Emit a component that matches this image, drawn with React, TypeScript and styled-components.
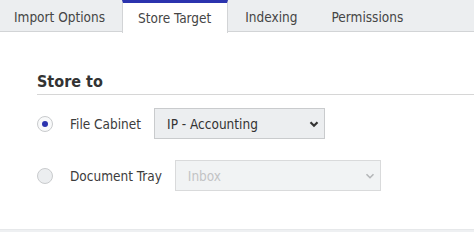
import React, { useState } from 'react';
import styled, { createGlobalStyle } from 'styled-components';

const GlobalStyle = createGlobalStyle`
  html, body {
    margin: 0;
    padding: 0;
    background: #ffffff;
  }
  body {
    font-family: "DejaVu Sans Condensed", "DejaVu Sans", sans-serif;
    color: #3c3c3c;
  }
`;

const Page = styled.div`
  width: 474px;
  height: 232px;
  display: flex;
  flex-direction: column;
  overflow: hidden;
`;

// Tab strip along the top
const TabBar = styled.div`
  display: flex;
  height: 32px;
  background: #eceef0;
  border-bottom: 1px solid #d2d4d6;
  box-sizing: border-box;
`;

const Tab = styled.div<{ $active?: boolean }>`
  display: flex;
  align-items: center;
  padding: 0 ${(p) => (p.$active ? '16px 0 15px' : '17px')};
  font-size: 13.5px;
  color: #454545;
  box-sizing: border-box;
  height: ${(p) => (p.$active ? '33px' : '31px')};
  background: ${(p) => (p.$active ? '#ffffff' : 'transparent')};
  border-top: ${(p) => (p.$active ? '3px solid #2b33ae' : '0')};
  border-left: ${(p) => (p.$active ? '1px solid #d2d4d6' : '0')};
  border-right: ${(p) => (p.$active ? '1px solid #d2d4d6' : '0')};
  padding-top: ${(p) => (p.$active ? '0' : '3px')};
  cursor: pointer;

  &:first-child {
    padding-left: 14px;
  }
`;

const Body = styled.div`
  flex: 1;
  padding: 40px 0 0 37px;
  border-bottom: 1px solid #e6e8ea;
`;

const SectionTitle = styled.h3`
  margin: 0;
  font-size: 16px;
  font-weight: bold;
  color: #333333;
  padding-bottom: 3px;
  border-bottom: 1px solid #d6d6d6;
  line-height: 19px;
`;

const Options = styled.div`
  display: flex;
  flex-direction: column;
  gap: 21px;
  padding-top: 13px;
`;

const Row = styled.label`
  display: flex;
  align-items: center;
  font-size: 13.5px;
  color: #3c3c3c;
  cursor: pointer;
`;

const Radio = styled.span<{ $checked?: boolean }>`
  width: 16px;
  height: 16px;
  border-radius: 50%;
  box-sizing: border-box;
  border: 1px solid #c9cbcd;
  background: ${(p) => (p.$checked ? '#f8f9fa' : '#eceef0')};
  display: flex;
  align-items: center;
  justify-content: center;
  margin-right: 17px;
  flex-shrink: 0;

  &::after {
    content: '';
    width: 6px;
    height: 6px;
    border-radius: 50%;
    background: #2b33ae;
    display: ${(p) => (p.$checked ? 'block' : 'none')};
  }
`;

const LabelText = styled.span`
  margin-right: 13px;
`;

const SelectWrap = styled.div<{ $width: number }>`
  position: relative;
  width: ${(p) => p.$width}px;
`;

const Select = styled.select`
  appearance: none;
  -webkit-appearance: none;
  width: 100%;
  height: 31px;
  box-sizing: border-box;
  padding: 0 28px 0 12px;
  border: 1px solid #c9cbcd;
  border-radius: 0;
  background: #eceef0;
  font-family: inherit;
  font-size: 13.5px;
  color: #333333;
  outline: none;

  &:disabled {
    color: #a9abad;
  }
`;

const Chevron = styled.svg<{ $muted?: boolean }>`
  position: absolute;
  right: 6px;
  top: 50%;
  margin-top: -5px;
  width: 10px;
  height: 10px;
  pointer-events: none;
  stroke: ${(p) => (p.$muted ? '#b4b6b8' : '#333333')};
`;

const Footer = styled.div`
  height: 2px;
  background: #eef0f2;
`;

const tabs = ['Import Options', 'Store Target', 'Indexing', 'Permissions'];

const App = () => {
  const [target, setTarget] = useState('cabinet');

  return (
    <Page>
      <GlobalStyle />
      <TabBar>
        {tabs.map((t) => (
          <Tab key={t} $active={t === 'Store Target'}>
            {t}
          </Tab>
        ))}
      </TabBar>
      <Body>
        <SectionTitle>Store to</SectionTitle>
        <Options>
          <Row onClick={() => setTarget('cabinet')}>
            <Radio $checked={target === 'cabinet'} />
            <LabelText>File Cabinet</LabelText>
            <SelectWrap $width={171}>
              <Select defaultValue="IP - Accounting" disabled={target !== 'cabinet'}>
                <option>IP - Accounting</option>
              </Select>
              <Chevron viewBox="0 0 10 10" fill="none" strokeWidth="2.2" $muted={target !== 'cabinet'}>
                <path d="M1.5 3.2 L5 6.7 L8.5 3.2" />
              </Chevron>
            </SelectWrap>
          </Row>
          <Row onClick={() => setTarget('tray')}>
            <Radio $checked={target === 'tray'} />
            <LabelText>Document Tray</LabelText>
            <SelectWrap $width={206}>
              <Select defaultValue="Inbox" disabled={target !== 'tray'}>
                <option>Inbox</option>
              </Select>
              <Chevron viewBox="0 0 10 10" fill="none" strokeWidth="1.6" $muted={target !== 'tray'}>
                <path d="M1.5 3.2 L5 6.7 L8.5 3.2" />
              </Chevron>
            </SelectWrap>
          </Row>
        </Options>
      </Body>
      <Footer />
    </Page>
  );
};

export default App;
